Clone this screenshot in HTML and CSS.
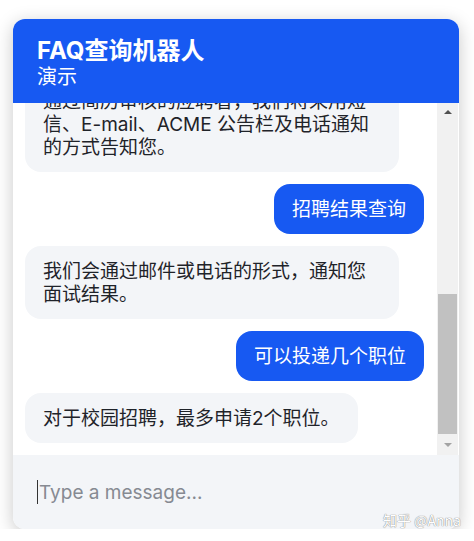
FILE: index.html
```html
<!DOCTYPE html>
<html lang="zh-CN">
<head>
  <meta charset="UTF-8">
  <meta name="viewport" content="width=device-width, initial-scale=1.0">
  <title>FAQ查询机器人</title>
  <link rel="stylesheet" href="styles.css">
</head>
<body>
  <div class="chat-widget">
    <div class="chat-header">
      <h1>FAQ查询机器人</h1>
      <p>演示</p>
    </div>

    <div class="chat-body">
      <!-- Message list, pinned to the bottom -->
      <div class="messages">
        <div class="msg bot">通过简历审核的应聘者，我们将采用短信、E-mail、ACME 公告栏及电话通知的方式告知您。</div>
        <div class="msg user">招聘结果查询</div>
        <div class="msg bot">我们会通过邮件或电话的形式，通知您面试结果。</div>
        <div class="msg user">可以投递几个职位</div>
        <div class="msg bot">对于校园招聘，最多申请2个职位。</div>
      </div>

      <!-- Scrollbar -->
      <div class="scrollbar">
        <div class="scroll-btn"><span class="arrow-up"></span></div>
        <div class="scroll-track"><div class="scroll-thumb"></div></div>
        <div class="scroll-btn down"><span class="arrow-down"></span></div>
      </div>
    </div>

    <div class="chat-input">
      <span class="caret"></span>
      <input type="text" placeholder="Type a message...">
    </div>
  </div>

  <div class="watermark">知乎 @Anna</div>
</body>
</html>
```

FILE: styles.css
```css
body {
  margin: 0;
  padding: 19px 0 0 13px;
  background-color: #fff;
  font-family: Inter, "Noto Sans CJK SC", sans-serif;
}
.chat-widget {
  width: 446px;
  height: 510px;
  display: flex;
  flex-direction: column;
  border-radius: 12px;
  overflow: hidden;
  background-color: #fff;
  box-shadow: 0 4px 18px rgba(0, 0, 0, 0.22);
}
.chat-header {
  background-color: #1759f2;
  color: #fff;
  padding: 17px 24px 15px 24px;
  height: 52px;
}
.chat-header h1 {
  margin: 0;
  font-size: 24px;
  line-height: 29px;
  font-weight: 700;
}
.chat-header p {
  margin: 0;
  font-size: 20px;
  line-height: 24px;
}
.chat-body {
  flex: 1;
  display: flex;
  min-height: 0;
}
.messages {
  flex: 1;
  display: flex;
  flex-direction: column;
  justify-content: flex-end;
  gap: 12px;
  padding: 0 13px 12px 12px;
  overflow: hidden;
}
.msg {
  flex-shrink: 0;
  max-width: 338px;
  padding: 14px 18px 13px 18px;
  border-radius: 16px;
  font-size: 19px;
  line-height: 23px;
}
.msg.bot {
  align-self: flex-start;
  background-color: #f3f5f8;
  color: #1f2329;
}
.msg.user {
  align-self: flex-end;
  background-color: #1759f2;
  color: #fff;
}
.scrollbar {
  width: 21px;
  margin-right: 1px;
  display: flex;
  flex-direction: column;
  background-color: #f1f1f1;
}
.scroll-btn {
  height: 17px;
  display: flex;
  align-items: center;
  justify-content: center;
}
.scroll-btn.down {
  height: 21px;
}
.arrow-up {
  border-left: 4px solid transparent;
  border-right: 4px solid transparent;
  border-bottom: 4px solid #505050;
}
.arrow-down {
  border-left: 4px solid transparent;
  border-right: 4px solid transparent;
  border-top: 4px solid #a3a3a3;
}
.scroll-track {
  flex: 1;
  display: flex;
  flex-direction: column;
  justify-content: flex-end;
}
.scroll-thumb {
  height: 140px;
  margin: 0 1px;
  background-color: #c1c1c1;
}
.chat-input {
  height: 74px;
  display: flex;
  align-items: center;
  padding-left: 24px;
  background-color: #f3f5f8;
}
.chat-input .caret {
  width: 1px;
  height: 24px;
  background-color: #333;
}
.chat-input input {
  flex: 1;
  border: none;
  outline: none;
  background: transparent;
  padding: 0 0 0 1px;
  font-family: Inter, "Noto Sans CJK SC", sans-serif;
  font-size: 19px;
  color: #333;
}
.chat-input input::placeholder {
  color: #868a92;
}
.watermark {
  position: absolute;
  left: 383px;
  top: 510px;
  font-family: "Noto Sans CJK SC", sans-serif;
  font-size: 14px;
  line-height: 20px;
  color: #fff;
  text-shadow: 0 0 1px #888, 0 0 1px #888;
}
```
